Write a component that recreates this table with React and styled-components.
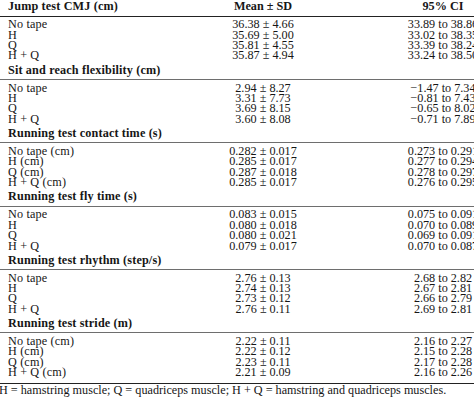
import React from "react";
import styled, { createGlobalStyle } from "styled-components";

const Global = createGlobalStyle`
  html, body {
    margin: 0;
    padding: 0;
    background: #ffffff;
    overflow: hidden;
  }
  body {
    width: 474px;
    height: 400px;
  }
`;

const groups = [
  {
    title: "Jump test CMJ (cm)",
    rows: [
      ["No tape", "36.38 ± 4.66", "33.89 to 38.86"],
      ["H", "35.69 ± 5.00", "33.02 to 38.35"],
      ["Q", "35.81 ± 4.55", "33.39 to 38.24"],
      ["H + Q", "35.87 ± 4.94", "33.24 to 38.50"],
    ],
  },
  {
    title: "Sit and reach flexibility (cm)",
    rows: [
      ["No tape", "2.94 ± 8.27", "−1.47 to 7.34"],
      ["H", "3.31 ± 7.73", "−0.81 to 7.43"],
      ["Q", "3.69 ± 8.15", "−0.65 to 8.02"],
      ["H + Q", "3.60 ± 8.08", "−0.71 to 7.89"],
    ],
  },
  {
    title: "Running test contact time (s)",
    rows: [
      ["No tape (cm)", "0.282 ± 0.017", "0.273 to 0.291"],
      ["H (cm)", "0.285 ± 0.017", "0.277 to 0.294"],
      ["Q (cm)", "0.287 ± 0.018", "0.278 to 0.297"],
      ["H + Q (cm)", "0.285 ± 0.017", "0.276 to 0.295"],
    ],
  },
  {
    title: "Running test fly time (s)",
    rows: [
      ["No tape", "0.083 ± 0.015", "0.075 to 0.091"],
      ["H", "0.080 ± 0.018", "0.070 to 0.089"],
      ["Q", "0.080 ± 0.021", "0.069 to 0.091"],
      ["H + Q", "0.079 ± 0.017", "0.070 to 0.087"],
    ],
  },
  {
    title: "Running test rhythm (step/s)",
    rows: [
      ["No tape", "2.76 ± 0.13", "2.68 to 2.82"],
      ["H", "2.74 ± 0.13", "2.67 to 2.81"],
      ["Q", "2.73 ± 0.12", "2.66 to 2.79"],
      ["H + Q", "2.76 ± 0.11", "2.69 to 2.81"],
    ],
  },
  {
    title: "Running test stride (m)",
    rows: [
      ["No tape (cm)", "2.22 ± 0.11", "2.16 to 2.27"],
      ["H (cm)", "2.22 ± 0.12", "2.15 to 2.28"],
      ["Q (cm)", "2.23 ± 0.11", "2.17 to 2.28"],
      ["H + Q (cm)", "2.21 ± 0.09", "2.16 to 2.26"],
    ],
  },
];

const Table = styled.div`
  width: 570px;
  margin: 0 0 0 -1px;
  font-family: "Liberation Serif", "Times New Roman", serif;
  font-size: 12.2px;
  color: #161616;
  white-space: nowrap;
`;

const Row = styled.div`
  display: grid;
  grid-template-columns: 214px 100px 260px;
  height: ${(p) => p.$h}px;
  line-height: ${(p) => p.$h}px;
  font-weight: ${(p) => (p.$bold ? 700 : 400)};
  padding: ${(p) => p.$pad || "0"};
`;

const Label = styled.div`
  padding-left: 9px;
  letter-spacing: 0.15px;
`;

const Cell = styled.div`
  text-align: center;
`;

const Rule = styled.div`
  height: 0;
  border-top: ${(p) => p.$w}px solid ${(p) => p.$c};
`;

const Body = styled.div`
  padding: ${(p) => p.$pad};
`;

const Footnote = styled.div`
  line-height: 12px;
  height: 12px;
`;

export default function App() {
  return (
    <>
      <Global />
      <Table>
        {groups.map((g, i) => (
          <React.Fragment key={g.title}>
            {i === 0 ? (
              <Row $bold $h={12} $pad="0 0 3.5px">
                <Label>{g.title}</Label>
                <Cell>Mean ± SD</Cell>
                <Cell>95% CI</Cell>
              </Row>
            ) : (
              <Row $bold $h={12} $pad="2.8px 0 3.2px">
                <Label>{g.title}</Label>
                <Cell />
                <Cell />
              </Row>
            )}
            <Rule
              $w={i === 0 ? 1.4 : 1.2}
              $c={i === 0 ? "#222" : "#6e6e6e"}
            />
            <Body $pad={i === groups.length - 1 ? "2.8px 0 5px" : "2.8px 0 0"}>
              {g.rows.map((r) => (
                <Row key={r[0]} $h={10.4}>
                  <Label>{r[0]}</Label>
                  <Cell>{r[1]}</Cell>
                  <Cell>{r[2]}</Cell>
                </Row>
              ))}
            </Body>
          </React.Fragment>
        ))}
        <Rule $w={1.4} $c="#222" />
        <Footnote>
          H = hamstring muscle; Q = quadriceps muscle; H + Q = hamstring and
          quadriceps muscles.
        </Footnote>
      </Table>
    </>
  );
}
